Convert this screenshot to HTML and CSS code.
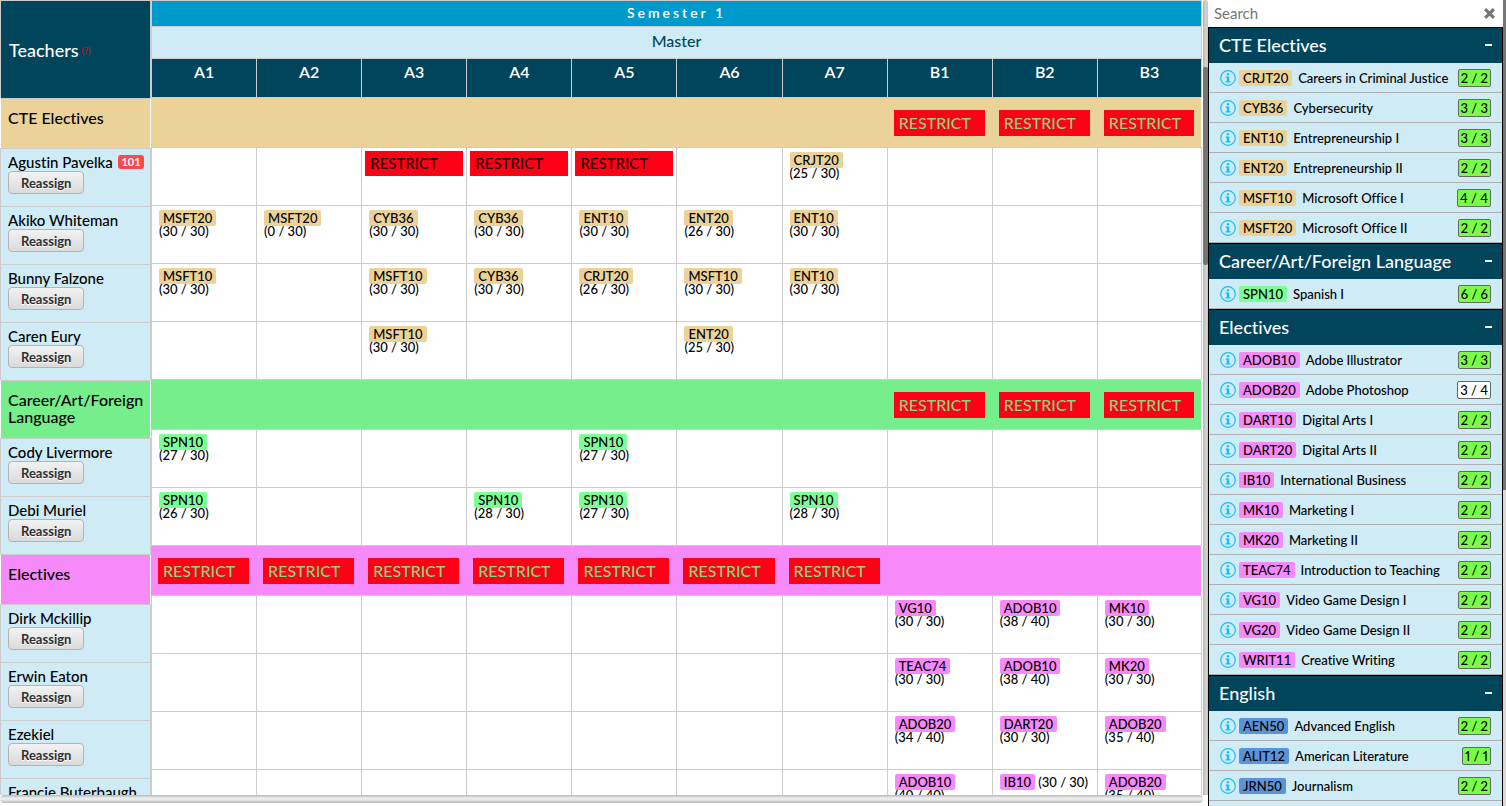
FILE: index.html
```html
<!DOCTYPE html>
<html lang="en">

<head>
    <meta charset="UTF-8">
    <meta name="viewport" content="width=device-width, initial-scale=1.0">

    <title>Master Schedule</title>
    <link rel="stylesheet" href="styles.css">
</head>

<body>
    <!-- info icon, shared by every course row -->
    <svg class="sprite" aria-hidden="true">
        <symbol id="info" viewBox="0 0 16 16">
            <circle cx="8" cy="8" r="7.3" fill="none" stroke="#1cbcf2" stroke-width="1.2"/>
            <path d="M6.7 3.2h2.4v2H6.7zM5.7 6.4h3.5v4.8h1.2v1.4H5.6v-1.4h1.2V7.8H5.7z" fill="#1cbcf2"/>
        </symbol>
    </svg>

    <main class="schedule">
        <div class="board">
            <table class="teachers">
                <thead>
                    <tr><th>Teachers<a class="help" href="#">(?)</a></th></tr>
                </thead>
                <tbody>
                    <tr class="category tan"><th>CTE Electives</th></tr>
                    <tr><td>Agustin Pavelka <span class="room">101</span><button type="button">Reassign</button></td></tr>
                    <tr><td>Akiko Whiteman<button type="button">Reassign</button></td></tr>
                    <tr><td>Bunny Falzone<button type="button">Reassign</button></td></tr>
                    <tr><td>Caren Eury<button type="button">Reassign</button></td></tr>
                    <tr class="category tall green"><th>Career/Art/Foreign Language</th></tr>
                    <tr><td>Cody Livermore<button type="button">Reassign</button></td></tr>
                    <tr><td>Debi Muriel<button type="button">Reassign</button></td></tr>
                    <tr class="category pink"><th>Electives</th></tr>
                    <tr><td>Dirk Mckillip<button type="button">Reassign</button></td></tr>
                    <tr><td>Erwin Eaton<button type="button">Reassign</button></td></tr>
                    <tr><td>Ezekiel<button type="button">Reassign</button></td></tr>
                    <tr><td>Francie Buterbaugh</td></tr>
                </tbody>
            </table>

            <table class="periods">
                <thead>
                    <tr class="semester"><th colspan="10">Semester 1</th></tr>
                    <tr class="master"><th colspan="10">Master</th></tr>
                    <tr class="names">
                        <th>A1</th><th>A2</th><th>A3</th><th>A4</th><th>A5</th>
                        <th>A6</th><th>A7</th><th>B1</th><th>B2</th><th>B3</th>
                    </tr>
                </thead>
                <tbody>
                    <tr class="category tan">
                        <td></td><td></td><td></td><td></td><td></td><td></td><td></td>
                        <td><div class="restrict">RESTRICT</div></td>
                        <td><div class="restrict">RESTRICT</div></td>
                        <td><div class="restrict">RESTRICT</div></td>
                    </tr>
                    <tr class="cte">
                        <td></td><td></td>
                        <td class="blocked"><div class="restrict">RESTRICT</div></td>
                        <td class="blocked"><div class="restrict">RESTRICT</div></td>
                        <td class="blocked"><div class="restrict">RESTRICT</div></td>
                        <td></td>
                        <td><span class="code">CRJT20</span> <span class="seats">(25 / 30)</span></td>
                        <td></td><td></td><td></td>
                    </tr>
                    <tr class="cte">
                        <td><span class="code">MSFT20</span> <span class="seats">(30 / 30)</span></td>
                        <td><span class="code">MSFT20</span> <span class="seats">(0 / 30)</span></td>
                        <td><span class="code">CYB36</span> <span class="seats">(30 / 30)</span></td>
                        <td><span class="code">CYB36</span> <span class="seats">(30 / 30)</span></td>
                        <td><span class="code">ENT10</span> <span class="seats">(30 / 30)</span></td>
                        <td><span class="code">ENT20</span> <span class="seats">(26 / 30)</span></td>
                        <td><span class="code">ENT10</span> <span class="seats">(30 / 30)</span></td>
                        <td></td><td></td><td></td>
                    </tr>
                    <tr class="cte">
                        <td><span class="code">MSFT10</span> <span class="seats">(30 / 30)</span></td>
                        <td></td>
                        <td><span class="code">MSFT10</span> <span class="seats">(30 / 30)</span></td>
                        <td><span class="code">CYB36</span> <span class="seats">(30 / 30)</span></td>
                        <td><span class="code">CRJT20</span> <span class="seats">(26 / 30)</span></td>
                        <td><span class="code">MSFT10</span> <span class="seats">(30 / 30)</span></td>
                        <td><span class="code">ENT10</span> <span class="seats">(30 / 30)</span></td>
                        <td></td><td></td><td></td>
                    </tr>
                    <tr class="cte">
                        <td></td><td></td>
                        <td><span class="code">MSFT10</span> <span class="seats">(30 / 30)</span></td>
                        <td></td><td></td>
                        <td><span class="code">ENT20</span> <span class="seats">(25 / 30)</span></td>
                        <td></td><td></td><td></td><td></td>
                    </tr>
                    <tr class="category green">
                        <td></td><td></td><td></td><td></td><td></td><td></td><td></td>
                        <td><div class="restrict">RESTRICT</div></td>
                        <td><div class="restrict">RESTRICT</div></td>
                        <td><div class="restrict">RESTRICT</div></td>
                    </tr>
                    <tr class="lang">
                        <td><span class="code">SPN10</span> <span class="seats">(27 / 30)</span></td>
                        <td></td><td></td><td></td>
                        <td><span class="code">SPN10</span> <span class="seats">(27 / 30)</span></td>
                        <td></td><td></td><td></td><td></td><td></td>
                    </tr>
                    <tr class="lang">
                        <td><span class="code">SPN10</span> <span class="seats">(26 / 30)</span></td>
                        <td></td><td></td>
                        <td><span class="code">SPN10</span> <span class="seats">(28 / 30)</span></td>
                        <td><span class="code">SPN10</span> <span class="seats">(27 / 30)</span></td>
                        <td></td>
                        <td><span class="code">SPN10</span> <span class="seats">(28 / 30)</span></td>
                        <td></td><td></td><td></td>
                    </tr>
                    <tr class="category pink">
                        <td><div class="restrict">RESTRICT</div></td>
                        <td><div class="restrict">RESTRICT</div></td>
                        <td><div class="restrict">RESTRICT</div></td>
                        <td><div class="restrict">RESTRICT</div></td>
                        <td><div class="restrict">RESTRICT</div></td>
                        <td><div class="restrict">RESTRICT</div></td>
                        <td><div class="restrict">RESTRICT</div></td>
                        <td></td><td></td><td></td>
                    </tr>
                    <tr class="elective">
                        <td></td><td></td><td></td><td></td><td></td><td></td><td></td>
                        <td><span class="code">VG10</span> <span class="seats">(30 / 30)</span></td>
                        <td><span class="code">ADOB10</span> <span class="seats">(38 / 40)</span></td>
                        <td><span class="code">MK10</span> <span class="seats">(30 / 30)</span></td>
                    </tr>
                    <tr class="elective">
                        <td></td><td></td><td></td><td></td><td></td><td></td><td></td>
                        <td><span class="code">TEAC74</span> <span class="seats">(30 / 30)</span></td>
                        <td><span class="code">ADOB10</span> <span class="seats">(38 / 40)</span></td>
                        <td><span class="code">MK20</span> <span class="seats">(30 / 30)</span></td>
                    </tr>
                    <tr class="elective">
                        <td></td><td></td><td></td><td></td><td></td><td></td><td></td>
                        <td><span class="code">ADOB20</span> <span class="seats">(34 / 40)</span></td>
                        <td><span class="code">DART20</span> <span class="seats">(30 / 30)</span></td>
                        <td><span class="code">ADOB20</span> <span class="seats">(35 / 40)</span></td>
                    </tr>
                    <tr class="elective">
                        <td></td><td></td><td></td><td></td><td></td><td></td><td></td>
                        <td><span class="code">ADOB10</span> <span class="seats">(40 / 40)</span></td>
                        <td><span class="code">IB10</span> <span class="seats">(30 / 30)</span></td>
                        <td><span class="code">ADOB20</span> <span class="seats">(35 / 40)</span></td>
                    </tr>
                </tbody>
            </table>

            <div class="scroll-y"><div class="thumb"></div></div>
        </div>
        <div class="scroll-x"></div>
    </main>

    <aside class="courses">
        <div class="search">
            <input type="text" placeholder="Search" aria-label="Search">
            <button type="button" aria-label="Clear search">
                <svg width="11" height="11" viewBox="0 0 11 11"><path d="M2.3 2.3l6.4 6.4M8.7 2.3l-6.4 6.4" stroke="#757575" stroke-width="3.2" stroke-linecap="square"/></svg>
            </button>
        </div>

        <section class="cte">
            <h2>CTE Electives <button type="button" aria-label="Collapse"></button></h2>
            <ul>
                <li><a href="#" aria-label="Info"><svg><use href="#info"/></svg></a><span class="code">CRJT20</span><span class="title">Careers in Criminal Justice</span><span class="count">2 / 2</span></li>
                <li><a href="#" aria-label="Info"><svg><use href="#info"/></svg></a><span class="code">CYB36</span><span class="title">Cybersecurity</span><span class="count">3 / 3</span></li>
                <li><a href="#" aria-label="Info"><svg><use href="#info"/></svg></a><span class="code">ENT10</span><span class="title">Entrepreneurship I</span><span class="count">3 / 3</span></li>
                <li><a href="#" aria-label="Info"><svg><use href="#info"/></svg></a><span class="code">ENT20</span><span class="title">Entrepreneurship II</span><span class="count">2 / 2</span></li>
                <li><a href="#" aria-label="Info"><svg><use href="#info"/></svg></a><span class="code">MSFT10</span><span class="title">Microsoft Office I</span><span class="count">4 / 4</span></li>
                <li><a href="#" aria-label="Info"><svg><use href="#info"/></svg></a><span class="code">MSFT20</span><span class="title">Microsoft Office II</span><span class="count">2 / 2</span></li>
            </ul>
        </section>

        <section class="lang">
            <h2>Career/Art/Foreign Language <button type="button" aria-label="Collapse"></button></h2>
            <ul>
                <li><a href="#" aria-label="Info"><svg><use href="#info"/></svg></a><span class="code">SPN10</span><span class="title">Spanish I</span><span class="count">6 / 6</span></li>
            </ul>
        </section>

        <section class="elective">
            <h2>Electives <button type="button" aria-label="Collapse"></button></h2>
            <ul>
                <li><a href="#" aria-label="Info"><svg><use href="#info"/></svg></a><span class="code">ADOB10</span><span class="title">Adobe Illustrator</span><span class="count">3 / 3</span></li>
                <li><a href="#" aria-label="Info"><svg><use href="#info"/></svg></a><span class="code">ADOB20</span><span class="title">Adobe Photoshop</span><span class="count open">3 / 4</span></li>
                <li><a href="#" aria-label="Info"><svg><use href="#info"/></svg></a><span class="code">DART10</span><span class="title">Digital Arts I</span><span class="count">2 / 2</span></li>
                <li><a href="#" aria-label="Info"><svg><use href="#info"/></svg></a><span class="code">DART20</span><span class="title">Digital Arts II</span><span class="count">2 / 2</span></li>
                <li><a href="#" aria-label="Info"><svg><use href="#info"/></svg></a><span class="code">IB10</span><span class="title">International Business</span><span class="count">2 / 2</span></li>
                <li><a href="#" aria-label="Info"><svg><use href="#info"/></svg></a><span class="code">MK10</span><span class="title">Marketing I</span><span class="count">2 / 2</span></li>
                <li><a href="#" aria-label="Info"><svg><use href="#info"/></svg></a><span class="code">MK20</span><span class="title">Marketing II</span><span class="count">2 / 2</span></li>
                <li><a href="#" aria-label="Info"><svg><use href="#info"/></svg></a><span class="code">TEAC74</span><span class="title">Introduction to Teaching</span><span class="count">2 / 2</span></li>
                <li><a href="#" aria-label="Info"><svg><use href="#info"/></svg></a><span class="code">VG10</span><span class="title">Video Game Design I</span><span class="count">2 / 2</span></li>
                <li><a href="#" aria-label="Info"><svg><use href="#info"/></svg></a><span class="code">VG20</span><span class="title">Video Game Design II</span><span class="count">2 / 2</span></li>
                <li><a href="#" aria-label="Info"><svg><use href="#info"/></svg></a><span class="code">WRIT11</span><span class="title">Creative Writing</span><span class="count">2 / 2</span></li>
            </ul>
        </section>

        <section class="english">
            <h2>English <button type="button" aria-label="Collapse"></button></h2>
            <ul>
                <li><a href="#" aria-label="Info"><svg><use href="#info"/></svg></a><span class="code">AEN50</span><span class="title">Advanced English</span><span class="count">2 / 2</span></li>
                <li><a href="#" aria-label="Info"><svg><use href="#info"/></svg></a><span class="code">ALIT12</span><span class="title">American Literature</span><span class="count">1 / 1</span></li>
                <li><a href="#" aria-label="Info"><svg><use href="#info"/></svg></a><span class="code">JRN50</span><span class="title">Journalism</span><span class="count">2 / 2</span></li>
                <li></li>
            </ul>
        </section>
    </aside>
    <div class="page-scroll"><div class="thumb"></div></div>
</body>

</html>
```

FILE: styles.css
```css
* {
    box-sizing: border-box;
}

body {
    margin: 0;
    display: flex;
    height: 100vh;
    overflow: hidden;
    background-color: #fff;
    color: #000;
    font-family: Lato, sans-serif;
    font-size: 15px;
    font-variant-ligatures: none;
}

button {
    font-family: inherit;
    cursor: pointer;
}

.sprite {
    display: none;
}

/* schedule */
.schedule {
    flex: 1;
    min-width: 0;
    display: flex;
    flex-direction: column;
    padding-bottom: 3px;
}

.board {
    flex: 1;
    min-height: 0;
    display: grid;
    grid-template-columns: 151px 1fr 5px;
    align-items: start;
    overflow: hidden;
}

table {
    border-collapse: separate;
    border-spacing: 0;
    table-layout: fixed;
    width: 100%;
}

th,
td {
    padding: 0;
    border-top: 1px solid #ccc;
    border-left: 1px solid #ccc;
    font-weight: 500;
    text-align: left;
    vertical-align: top;
}

tr > :last-child {
    border-right: 1px solid #ccc;
}

/* teacher column */
.teachers td {
    height: 58px;
    padding: 6px 0 0 7px;
    background-color: #ceebf6;
    line-height: 14px;
    white-space: nowrap;
}

.teachers thead th {
    height: 98px;
    padding-left: 8px;
    background-color: #00455b;
    color: #fff;
    font-size: 18px;
    vertical-align: middle;
}

.help {
    margin-left: 3px;
    color: #e00016;
    font-size: 9px;
    text-decoration: none;
    vertical-align: 3px;
}

.teachers .category th {
    height: 50px;
    padding: 10px 6px 0 7px;
    font-size: 16px;
    line-height: 17px;
}

.teachers .tall th {
    height: 58px;
}

.category.tan > * {
    background-color: #ebd299;
}

.category.green > * {
    background-color: #76ee8c;
}

.category.pink > * {
    background-color: #f78af9;
}

.category > :first-child {
    border-left-color: #fff;
}

.category > :last-child {
    border-right-color: #fff;
}

.teachers button {
    display: block;
    height: 23px;
    margin-top: 2px;
    padding: 0 12px;
    border: 1px solid #b3b3b3;
    border-radius: 4px;
    background-image: linear-gradient(#f2f2f2, #dadada);
    color: #2e2e2e;
    font-size: 13px;
    font-weight: 700;
    line-height: 18px;
    text-shadow: 0 1px 0 #fff;
}

.room {
    display: inline-block;
    margin-left: 2px;
    padding: 0 3px;
    border-radius: 3px;
    background-color: #ff474d;
    color: #fff;
    font-size: 11px;
    font-weight: 700;
    line-height: 14px;
    vertical-align: top;
}

/* period grid */
.periods {
    padding-right: 1px;
}

.periods thead th {
    text-align: center;
}

.periods .semester th {
    height: 26px;
    background-color: #09c;
    color: #fff;
    font-size: 14px;
    font-weight: 600;
    letter-spacing: 3px;
    line-height: 23px;
}

.periods .master th {
    height: 32px;
    background-color: #ceebf6;
    color: #00455b;
    font-size: 16px;
    line-height: 28px;
}

.periods .names th {
    height: 39px;
    background-color: #00455b;
    color: #fff;
    font-size: 16px;
    font-weight: 600;
    line-height: 26px;
}

.periods td {
    height: 58px;
    padding: 6px 7px 0;
    font-size: 13px;
    line-height: 13px;
}

.periods .category td {
    height: 50px;
    padding: 12px 7px 0;
    border-left: 0;
}

.restrict {
    padding-left: 5px;
    background-color: #ff0016;
    color: #87d97b;
    font-size: 16px;
    line-height: 26px;
}

.periods .blocked {
    padding: 3px 3px 0;
}

.blocked .restrict {
    color: #200;
    font-size: 15px;
    line-height: 25px;
}

.code {
    padding: 0 4px;
    border-radius: 2px;
    font-weight: 500;
    white-space: nowrap;
}

.seats {
    font-weight: 500;
    white-space: nowrap;
}

.cte .code {
    background-color: #ebd299;
}

.lang .code {
    background-color: #7dff95;
}

.elective .code {
    background-color: #f78af9;
}

.english .code {
    background-color: #5b93d8;
}

/* scrollbars */
.scroll-y {
    align-self: stretch;
    padding-top: 67px;
    border-radius: 3px;
    background-image: linear-gradient(to right, #b5b5b5, #d4d4d4 60%, #c4c4c4);
}

.scroll-y .thumb {
    height: 198px;
    border-radius: 2px;
    background-color: #757575;
}

.scroll-x {
    height: 8px;
    margin-right: 5px;
    border-radius: 4px;
    background-image: linear-gradient(#b8b8b8, #efefef 40%, #e8e8e8 60%, #b8b8b8);
}

.page-scroll {
    width: 3px;
    background-color: #ddd8d5;
}

.page-scroll .thumb {
    height: 490px;
    background-color: #757575;
}

/* course list */
.courses {
    flex: none;
    width: 295px;
}

.search {
    display: flex;
    align-items: center;
    height: 27px;
    padding: 0 8px 0 6px;
}

.search input {
    flex: 1;
    min-width: 0;
    padding: 0 0 2px;
    border: 0;
    outline: 0;
    font-family: inherit;
    font-size: 15px;
}

.search input::placeholder {
    color: #757575;
}

.search button {
    display: flex;
    padding: 0;
    border: 0;
    background: none;
}

.courses section {
    border-right: 1px solid #000;
    border-left: 1px solid #000;
}

.courses h2 {
    display: flex;
    align-items: center;
    justify-content: space-between;
    height: 36px;
    margin: 0;
    padding: 0 10px 2px;
    border-top: 1px solid #000;
    background-color: #00455b;
    color: #fff;
    font-size: 18px;
    font-weight: 500;
}

.courses h2 button {
    width: 7px;
    height: 2px;
    padding: 0;
    border: 0;
    background-color: #fff;
}

.courses ul {
    margin: 0;
    padding: 0;
    list-style: none;
}

.courses li {
    display: flex;
    align-items: center;
    height: 30px;
    padding: 0 11px 0 10px;
    border-bottom: 1px solid #b0b0b0;
    background-color: #ceebf6;
    font-size: 13px;
    font-weight: 500;
    line-height: 16px;
    white-space: nowrap;
}

.courses li a {
    display: flex;
    margin: 0 3px 0 1px;
}

.courses li svg {
    width: 16px;
    height: 16px;
}

.title {
    flex: 1;
    min-width: 0;
    margin-left: 6px;
}

.count {
    padding: 0 2px;
    border: 1px solid #666;
    border-radius: 2px;
    background-color: #79fe48;
    font-variant-numeric: proportional-nums;
}

.count.open {
    background-color: #fff;
}
```
